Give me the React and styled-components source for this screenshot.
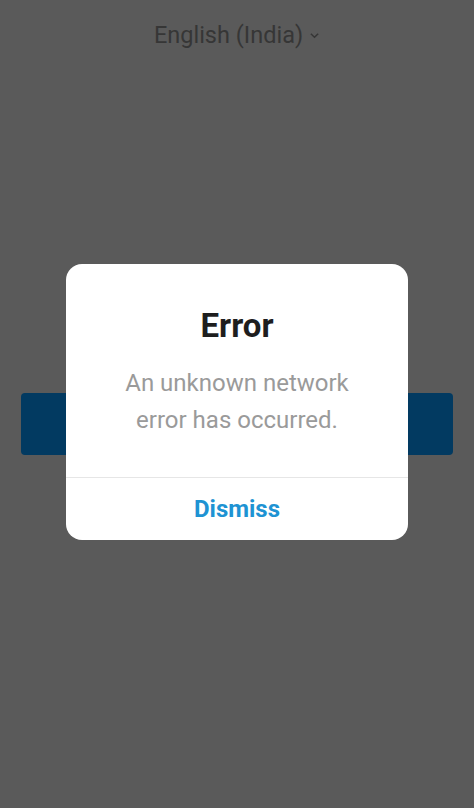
import React from "react";
import styled, { createGlobalStyle } from "styled-components";

const Global = createGlobalStyle`
  html, body {
    margin: 0;
    padding: 0;
    background: #5a5a5a;
    font-family: Roboto, "Noto Sans", sans-serif;
  }
`;

const Screen = styled.div`
  position: relative;
  width: 474px;
  height: 808px;
  overflow: hidden;
  display: flex;
  flex-direction: column;
  align-items: center;
  background: #5a5a5a;
`;

const Language = styled.div`
  margin-top: 20px;
  display: flex;
  align-items: center;
  gap: 6px;
  font-size: 23.5px;
  color: #363636;
  line-height: 30px;
`;

const LoginButton = styled.div`
  margin-top: 343px;
  width: 432px;
  height: 62px;
  border-radius: 4px;
  background: #023a61;
`;

const Backdrop = styled.div`
  position: absolute;
  inset: 0;
  display: flex;
  justify-content: center;
  padding-top: 264px;
`;

const Dialog = styled.div`
  width: 342px;
  height: 276px;
  box-sizing: border-box;
  background: #fff;
  border-radius: 16px;
  display: flex;
  flex-direction: column;
`;

const Body = styled.div`
  flex: 1;
  display: flex;
  flex-direction: column;
  align-items: center;
  padding-top: 42px;
`;

const Title = styled.h2`
  margin: 0;
  font-size: 33px;
  font-weight: 700;
  color: #1e1e1e;
  line-height: 40px;
`;

const Message = styled.p`
  margin: 19px 0 0;
  text-align: center;
  font-size: 24px;
  line-height: 37px;
  color: #9a9a9a;
`;

const Action = styled.button`
  height: 63px;
  border: none;
  border-top: 1px solid #e6e6e6;
  background: transparent;
  font-family: inherit;
  font-size: 24px;
  font-weight: 700;
  color: #1e93d3;
  padding: 0;
`;

export default function App() {
  return (
    <>
      <Global />
      <Screen>
        <Language>
          English (India)
          <svg width="11" height="11" viewBox="0 0 12 12" fill="none">
            <path d="M2 4l4 4 4-4" stroke="#363636" strokeWidth="1.6" />
          </svg>
        </Language>
        <LoginButton />
        <Backdrop>
          <Dialog>
            <Body>
              <Title>Error</Title>
              <Message>
                An unknown network
                <br />
                error has occurred.
              </Message>
            </Body>
            <Action>Dismiss</Action>
          </Dialog>
        </Backdrop>
      </Screen>
    </>
  );
}
